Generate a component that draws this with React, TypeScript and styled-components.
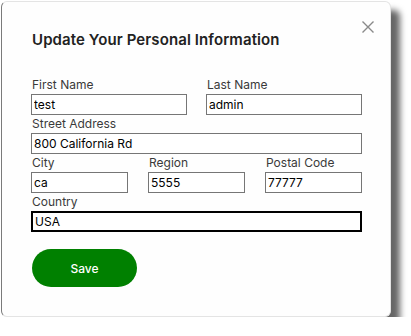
import React from "react";
import styled, { createGlobalStyle } from "styled-components";

const GlobalStyle = createGlobalStyle`
  html, body {
    margin: 0;
    padding: 0;
    background: #ffffff;
  }
  body {
    font-family: Inter, "Noto Sans", Arial, sans-serif;
  }
`;

const Modal = styled.div`
  position: relative;
  box-sizing: border-box;
  width: 390px;
  height: 316px;
  margin: 1px 0 0 1px;
  padding: 28px 28px 0 29px;
  background: #fefefe;
  border: 1px solid #e4e4e4;
  border-left-color: #7a7a7a;
  border-radius: 6px;
  box-shadow: 9px 9px 6px rgba(0, 0, 0, 0.6);
`;

const Close = styled.button`
  position: absolute;
  top: 18px;
  right: 15px;
  width: 14px;
  height: 14px;
  padding: 0;
  border: none;
  background: transparent;
  cursor: pointer;
  display: flex;
`;

const Title = styled.h2`
  margin: 0 0 26px 1px;
  font-size: 15px;
  line-height: 20px;
  font-weight: 600;
  letter-spacing: 0.1px;
  color: #222222;
`;

const Form = styled.form`
  display: flex;
  flex-direction: column;
`;

const Row = styled.div<{ $cols: number }>`
  display: grid;
  grid-template-columns: repeat(${({ $cols }) => $cols}, 1fr);
  column-gap: ${({ $cols }) => ($cols === 3 ? 20 : 19)}px;
`;

const Field = styled.label`
  display: flex;
  flex-direction: column;
`;

const LabelText = styled.span`
  font-size: 12px;
  line-height: 17px;
  margin: 0 0 1px 1px;
  color: #3a3a3a;
`;

const Input = styled.input<{ $focused?: boolean }>`
  box-sizing: border-box;
  width: 100%;
  height: 21px;
  margin: 0;
  padding: 0 2px;
  font-family: Inter, "Noto Sans", Arial, sans-serif;
  font-size: 12px;
  color: #000000;
  background: #ffffff;
  border: ${({ $focused }) => ($focused ? "2px solid #000000" : "1px solid #767676")};
  border-radius: 0;
  outline: none;
`;

const SaveButton = styled.button`
  align-self: flex-start;
  width: 105px;
  height: 38px;
  margin: 17px 0 0 1px;
  border: none;
  border-radius: 19px;
  background: #008000;
  color: #ffffff;
  font-family: Inter, "Noto Sans", Arial, sans-serif;
  font-size: 12px;
  font-weight: 500;
  cursor: pointer;
`;

const CloseIcon = () => (
  <svg width="14" height="14" viewBox="0 0 14 14" fill="none">
    <path d="M1.5 1.5 L12.5 12.5 M12.5 1.5 L1.5 12.5" stroke="#8a8a8a" strokeWidth="1.4" />
  </svg>
);

const fields = {
  firstName: "test",
  lastName: "admin",
  street: "800 California Rd",
  city: "ca",
  region: "5555",
  postal: "77777",
  country: "USA",
};

export default function App() {
  return (
    <>
      <GlobalStyle />
      <Modal>
        <Close aria-label="Close">
          <CloseIcon />
        </Close>
        <Title>Update Your Personal Information</Title>
        <Form onSubmit={(e) => e.preventDefault()}>
          <Row $cols={2}>
            <Field>
              <LabelText>First Name</LabelText>
              <Input defaultValue={fields.firstName} />
            </Field>
            <Field>
              <LabelText>Last Name</LabelText>
              <Input defaultValue={fields.lastName} />
            </Field>
          </Row>
          <Row $cols={1}>
            <Field>
              <LabelText>Street Address</LabelText>
              <Input defaultValue={fields.street} />
            </Field>
          </Row>
          <Row $cols={3}>
            <Field>
              <LabelText>City</LabelText>
              <Input defaultValue={fields.city} />
            </Field>
            <Field>
              <LabelText>Region</LabelText>
              <Input defaultValue={fields.region} />
            </Field>
            <Field>
              <LabelText>Postal Code</LabelText>
              <Input defaultValue={fields.postal} />
            </Field>
          </Row>
          <Row $cols={1}>
            <Field>
              <LabelText>Country</LabelText>
              <Input $focused defaultValue={fields.country} />
            </Field>
          </Row>
          <SaveButton type="submit">Save</SaveButton>
        </Form>
      </Modal>
    </>
  );
}
